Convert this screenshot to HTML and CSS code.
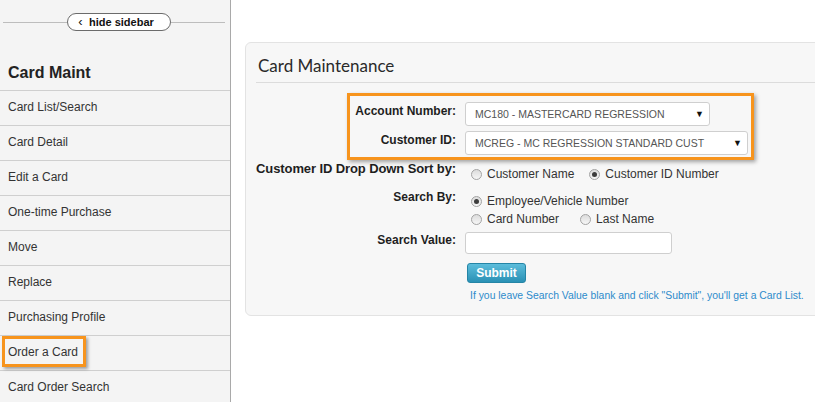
FILE: index.html
```html
<!DOCTYPE html>
<html lang="en">
  <head>
    <meta charset="UTF-8" />
    <meta name="viewport" content="width=device-width, initial-scale=1.0" />
    <title>Card Maintenance</title>
    <link rel="stylesheet" href="styles.css">
  </head>
  <body>
    <div class="page">
      <!-- sidebar -->
      <aside class="sidebar">
        <div class="sidebar-toggle">
          <button class="hide-btn" type="button"><span class="chev">&lsaquo;</span>hide sidebar</button>
        </div>
        <h2 class="side-title">Card Maint</h2>
        <ul class="side-nav">
          <li>Card List/Search</li>
          <li>Card Detail</li>
          <li>Edit a Card</li>
          <li>One-time Purchase</li>
          <li>Move</li>
          <li>Replace</li>
          <li>Purchasing Profile</li>
          <li><span class="callout">Order a Card</span></li>
          <li>Card Order Search</li>
        </ul>
      </aside>

      <!-- main content -->
      <main class="content">
        <section class="panel">
          <h1 class="panel-title">Card Maintenance</h1>
          <form class="maint-form">
            <div class="callout-box"></div>

            <div class="row row-account">
              <label class="field-label">Account Number:</label>
              <div class="select select-account">
                <span>MC180 - MASTERCARD REGRESSION</span>
                <span class="arrow">&#9660;</span>
              </div>
            </div>

            <div class="row row-customer">
              <label class="field-label">Customer ID:</label>
              <div class="select select-customer">
                <span>MCREG - MC REGRESSION STANDARD CUST</span>
                <span class="arrow">&#9660;</span>
              </div>
            </div>

            <div class="row row-sort">
              <label class="field-label sort-label">Customer ID Drop Down Sort by:</label>
              <div class="options sort-options">
                <span class="opt"><span class="radio"></span>Customer Name</span>
                <span class="opt"><span class="radio checked"></span>Customer ID Number</span>
              </div>
            </div>

            <div class="row row-search">
              <label class="field-label">Search By:</label>
              <div class="options search-options">
                <div class="opt-line">
                  <span class="opt"><span class="radio checked"></span>Employee/Vehicle Number</span>
                </div>
                <div class="opt-line">
                  <span class="opt"><span class="radio"></span>Card Number</span>
                  <span class="opt"><span class="radio"></span>Last Name</span>
                </div>
              </div>
            </div>

            <div class="row row-value">
              <label class="field-label">Search Value:</label>
              <div class="text-input"></div>
            </div>

            <div class="row row-submit">
              <span class="field-label"></span>
              <button class="submit-btn" type="button">Submit</button>
            </div>

            <div class="row row-help">
              <span class="field-label"></span>
              <p class="help-text">If you leave Search Value blank and click "Submit", you'll get a Card List.</p>
            </div>
          </form>
        </section>
      </main>
    </div>
  </body>
</html>
```

FILE: styles.css
```css
body {
  margin: 0;
  font-family: 'Liberation Sans', Arial, sans-serif;
  font-size: 12px;
  color: #333;
  background-color: #fff;
  overflow: hidden;
}

.page {
  display: flex;
  width: 815px;
  height: 402px;
  overflow: hidden;
}

/* sidebar */
.sidebar {
  flex: none;
  width: 230px;
  background-color: #f4f4f4;
  border-right: 1px solid #a9a9a9;
}

.sidebar-toggle {
  display: flex;
  align-items: center;
  padding: 13px 5px 0 3px;
}

.sidebar-toggle::before,
.sidebar-toggle::after {
  content: '';
  height: 1px;
  background-color: #bdbdbd;
}

.sidebar-toggle::before {
  width: 64px;
}

.sidebar-toggle::after {
  flex: 1;
}

.hide-btn {
  display: flex;
  align-items: center;
  width: 104px;
  height: 18px;
  padding: 0 0 0 4px;
  border: 1px solid #6b6b6b;
  border-radius: 9px;
  background-color: #fff;
  font-family: 'Liberation Sans', Arial, sans-serif;
  font-size: 11px;
  font-weight: bold;
  color: #111;
}

.chev {
  width: 17px;
  font-size: 13px;
  font-weight: normal;
  line-height: 14px;
}

.side-title {
  margin: 33px 0 0;
  padding: 0 8px 8px;
  font-size: 16px;
  line-height: 18px;
  color: #222;
}

.side-nav {
  list-style: none;
  margin: 0;
  padding: 0;
  border-top: 1px solid #cfcfcf;
}

.side-nav li {
  height: 34px;
  padding-left: 8px;
  line-height: 33px;
  border-bottom: 1px solid #cfcfcf;
  color: #333;
}

.callout {
  position: relative;
}

.callout::after {
  content: '';
  position: absolute;
  left: -6px;
  right: -8px;
  top: -9px;
  bottom: -8px;
  border: 3px solid #f7941d;
  box-shadow: 2px 2px 3px rgba(0, 0, 0, 0.35);
}

/* main content */
.content {
  flex: 1;
  padding: 42px 0 0 14px;
  overflow: hidden;
}

.panel {
  width: 620px;
  border: 1px solid #e3e3e3;
  border-radius: 6px;
  background-color: #f7f7f7;
}

.panel-title {
  margin: 0 10px;
  padding: 11px 2px 4px;
  font-family: Lato, 'Open Sans', sans-serif;
  font-size: 17px;
  font-weight: normal;
  line-height: 24px;
  color: #2a2a2a;
  border-bottom: 1px solid #dcdcdc;
}

.maint-form {
  position: relative;
  padding: 19px 0 12px 10px;
}

.callout-box {
  position: absolute;
  left: 101px;
  top: 10px;
  width: 401px;
  height: 61px;
  border: 3px solid #f7941d;
  box-shadow: 2px 2px 4px rgba(0, 0, 0, 0.35);
}

.row {
  display: flex;
  gap: 9px;
}

.field-label {
  flex: none;
  width: 200px;
  text-align: right;
  font-weight: bold;
  line-height: 16px;
  color: #1e1e1e;
  white-space: nowrap;
}

.row-account .field-label,
.row-customer .field-label {
  padding-top: 1px;
}

.row-customer {
  margin-top: 5px;
}

.row-sort {
  margin-top: 6px;
}

.sort-label {
  font-size: 13px;
  letter-spacing: -0.1px;
}

.row-search {
  margin-top: 7px;
}

.row-value {
  margin-top: 4px;
}

.row-submit {
  margin-top: 9px;
}

.row-help {
  margin-top: 6px;
}

/* dropdowns */
.select {
  display: flex;
  align-items: center;
  justify-content: space-between;
  box-sizing: border-box;
  height: 24px;
  padding: 0 5px 0 9px;
  border: 1px solid #cfcfcf;
  border-radius: 3px;
  background-color: #fff;
  font-size: 10.5px;
  color: #555;
}

.select-account {
  width: 245px;
}

.select-customer {
  width: 283px;
}

.arrow {
  font-size: 9px;
  color: #111;
}

/* radio options */
.options {
  line-height: 16px;
}

.sort-options {
  display: flex;
  gap: 9px;
  padding-top: 5px;
}

.search-options {
  padding-top: 3px;
}

.opt-line {
  display: flex;
  gap: 15px;
  height: 18px;
  align-items: center;
}

.opt {
  display: inline-flex;
  align-items: center;
}

.radio {
  box-sizing: border-box;
  width: 11px;
  height: 11px;
  margin: 0 5px 0 6px;
  border: 1px solid #a3a3a3;
  border-radius: 50%;
  background: linear-gradient(#dcdcdc, #f6f6f6);
  display: flex;
  align-items: center;
  justify-content: center;
}

.radio.checked::after {
  content: '';
  width: 5px;
  height: 5px;
  border-radius: 50%;
  background-color: #3c3c3c;
}

/* search value */
.text-input {
  box-sizing: border-box;
  width: 207px;
  height: 22px;
  border: 1px solid #cfcfcf;
  border-radius: 3px;
  background-color: #fff;
}

.submit-btn {
  width: 59px;
  height: 20px;
  margin-left: 2px;
  padding: 0;
  border: 1px solid #2585a6;
  border-radius: 3px;
  background: linear-gradient(#5cbddb, #2a91b5);
  color: #fff;
  font-family: 'Liberation Sans', Arial, sans-serif;
  font-size: 12px;
  font-weight: bold;
}

.help-text {
  margin: 0 0 0 5px;
  font-size: 10.4px;
  line-height: 14px;
  color: #2d8bcb;
  white-space: nowrap;
}
```
